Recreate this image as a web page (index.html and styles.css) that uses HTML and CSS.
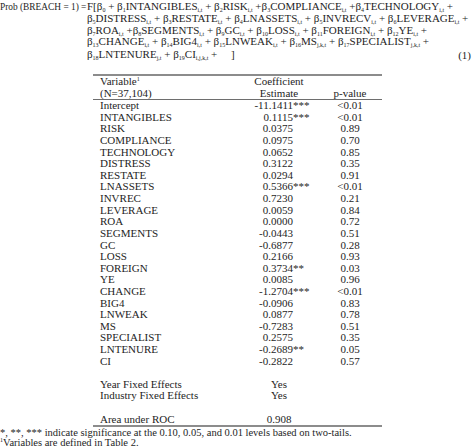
FILE: index.html
```html
<!DOCTYPE html>
<html>
<head>
<meta charset="utf-8">
<link rel="stylesheet" href="styles.css">
</head>
<body>
<div class="eq">
  <div class="eq-label"><span class="eq-label-text">Prob (BREACH = 1) =</span></div>
  <div class="eq-body">
    <div class="eq-line">F[β<sub>0</sub> + β<sub>1</sub>INTANGIBLES<sub>i,t</sub> + β<sub>2</sub>RISK<sub>i,t</sub> +β<sub>3</sub>COMPLIANCE<sub>i,t</sub> +β<sub>4</sub>TECHNOLOGY<sub>i,t</sub> +</div>
    <div class="eq-line">β<sub>5</sub>DISTRESS<sub>i,t</sub> + β<sub>3</sub>RESTATE<sub>i,t</sub> + β<sub>4</sub>LNASSETS<sub>i,t</sub> + β<sub>5</sub>INVRECV<sub>i,t</sub> + β<sub>6</sub>LEVERAGE<sub>i,t</sub> +</div>
    <div class="eq-line">β<sub>7</sub>ROA<sub>i,t</sub> +β<sub>8</sub>SEGMENTS<sub>i,t</sub> + β<sub>9</sub>GC<sub>i,t</sub> + β<sub>10</sub>LOSS<sub>i,t</sub> + β<sub>11</sub>FOREIGN<sub>i,t</sub> + β<sub>12</sub>YE<sub>i,t</sub> +</div>
    <div class="eq-line">β<sub>13</sub>CHANGE<sub>i,t</sub> + β<sub>14</sub>BIG4<sub>i,t</sub> + β<sub>15</sub>LNWEAK<sub>i,t</sub> + β<sub>16</sub>MS<sub>j,k,t</sub> + β<sub>17</sub>SPECIALIST<sub>j,k,t</sub> +</div>
    <div class="eq-line eq-last"><span>β<sub>18</sub>LNTENURE<sub>j,t</sub> + β<sub>19</sub>CI<sub>i,j,k,t</sub> + &nbsp;&nbsp;&nbsp; ]</span><span class="eq-num">(1)</span></div>
  </div>
</div>

<div class="res">
  <div class="head">
    <div class="row"><div class="var">Variable<sup>1</sup></div><div class="c">Coefficient</div><div class="p"></div></div>
    <div class="row"><div class="var">(N=37,104)</div><div class="c">Estimate</div><div class="p">p-value</div></div>
  </div>
  <div class="body">
    <div class="row"><div class="var">Intercept</div><div class="coef"><span class="num">-11.1411</span>***</div><div class="p">&lt;0.01</div></div>
    <div class="row"><div class="var">INTANGIBLES</div><div class="coef"><span class="num">0.1115</span>***</div><div class="p">&lt;0.01</div></div>
    <div class="row"><div class="var">RISK</div><div class="coef"><span class="num">0.0375</span></div><div class="p">0.89</div></div>
    <div class="row"><div class="var">COMPLIANCE</div><div class="coef"><span class="num">0.0975</span></div><div class="p">0.70</div></div>
    <div class="row"><div class="var">TECHNOLOGY</div><div class="coef"><span class="num">0.0652</span></div><div class="p">0.85</div></div>
    <div class="row"><div class="var">DISTRESS</div><div class="coef"><span class="num">0.3122</span></div><div class="p">0.35</div></div>
    <div class="row"><div class="var">RESTATE</div><div class="coef"><span class="num">0.0294</span></div><div class="p">0.91</div></div>
    <div class="row"><div class="var">LNASSETS</div><div class="coef"><span class="num">0.5366</span>***</div><div class="p">&lt;0.01</div></div>
    <div class="row"><div class="var">INVREC</div><div class="coef"><span class="num">0.7230</span></div><div class="p">0.21</div></div>
    <div class="row"><div class="var">LEVERAGE</div><div class="coef"><span class="num">0.0059</span></div><div class="p">0.84</div></div>
    <div class="row"><div class="var">ROA</div><div class="coef"><span class="num">0.0000</span></div><div class="p">0.72</div></div>
    <div class="row"><div class="var">SEGMENTS</div><div class="coef"><span class="num">-0.0443</span></div><div class="p">0.51</div></div>
    <div class="row"><div class="var">GC</div><div class="coef"><span class="num">-0.6877</span></div><div class="p">0.28</div></div>
    <div class="row"><div class="var">LOSS</div><div class="coef"><span class="num">0.2166</span></div><div class="p">0.93</div></div>
    <div class="row"><div class="var">FOREIGN</div><div class="coef"><span class="num">0.3734</span>**</div><div class="p">0.03</div></div>
    <div class="row"><div class="var">YE</div><div class="coef"><span class="num">0.0085</span></div><div class="p">0.96</div></div>
    <div class="row"><div class="var">CHANGE</div><div class="coef"><span class="num">-1.2704</span>***</div><div class="p">&lt;0.01</div></div>
    <div class="row"><div class="var">BIG4</div><div class="coef"><span class="num">-0.0906</span></div><div class="p">0.83</div></div>
    <div class="row"><div class="var">LNWEAK</div><div class="coef"><span class="num">0.0877</span></div><div class="p">0.78</div></div>
    <div class="row"><div class="var">MS</div><div class="coef"><span class="num">-0.7283</span></div><div class="p">0.51</div></div>
    <div class="row"><div class="var">SPECIALIST</div><div class="coef"><span class="num">0.2575</span></div><div class="p">0.35</div></div>
    <div class="row"><div class="var">LNTENURE</div><div class="coef"><span class="num">-0.2689</span>**</div><div class="p">0.05</div></div>
    <div class="row"><div class="var">CI</div><div class="coef"><span class="num">-0.2822</span></div><div class="p">0.57</div></div>
    <div class="row blank"></div>
    <div class="row"><div class="var">Year Fixed Effects</div><div class="c">Yes</div><div class="p"></div></div>
    <div class="row"><div class="var">Industry Fixed Effects</div><div class="c">Yes</div><div class="p"></div></div>
    <div class="row blank"></div>
    <div class="row"><div class="var">Area under ROC</div><div class="c">0.908</div><div class="p"></div></div>
  </div>
</div>

<div class="notes">
  <div>*, **, *** indicate significance at the 0.10, 0.05, and 0.01 levels based on two-tails.</div>
  <div><sup>1</sup>Variables are defined in Table 2.</div>
</div>
</body>
</html>
```

FILE: styles.css
```css
html, body {
  margin: 0;
  padding: 0;
  background: #ffffff;
}
body {
  font-family: "Liberation Serif", "Times New Roman", serif;
  font-size: 11px;
  color: #1e1e1e;
  width: 474px;
  height: 447px;
  overflow: hidden;
}
sub {
  font-size: 6px;
  line-height: 0;
  vertical-align: -2px;
}
sup {
  font-size: 6px;
  line-height: 0;
  vertical-align: 4px;
}
.eq {
  display: flex;
  padding-top: 1px;
  line-height: 11.8px;
}
.eq-label {
  width: 87px;
  flex: none;
  white-space: nowrap;
}
.eq-label-text {
  display: inline-block;
  transform: scaleX(0.85);
  transform-origin: left center;
}
.eq-body {
  flex: 1;
  white-space: nowrap;
}
.eq-last {
  display: flex;
  justify-content: space-between;
  padding-right: 3px;
  margin-top: 1px;
}
.eq-num {
  position: relative;
  top: 1px;
}
.res {
  margin-top: 13px;
  margin-left: 93px;
  width: 289px;
  border-top: 2px solid #8c8c8c;
  border-bottom: 2px solid #8c8c8c;
}
.head {
  border-bottom: 1px solid #6e6e6e;
}
.row {
  display: grid;
  grid-template-columns: 147px 78px 64px;
  height: 11.62px;
  line-height: 11.62px;
  white-space: nowrap;
}
.var {
  padding-left: 7px;
}
.c, .p {
  text-align: center;
}
.coef .num {
  display: inline-block;
  width: 53px;
  text-align: right;
}
.notes {
  padding-top: 1px;
  line-height: 10px;
  font-size: 10.5px;
}
```
